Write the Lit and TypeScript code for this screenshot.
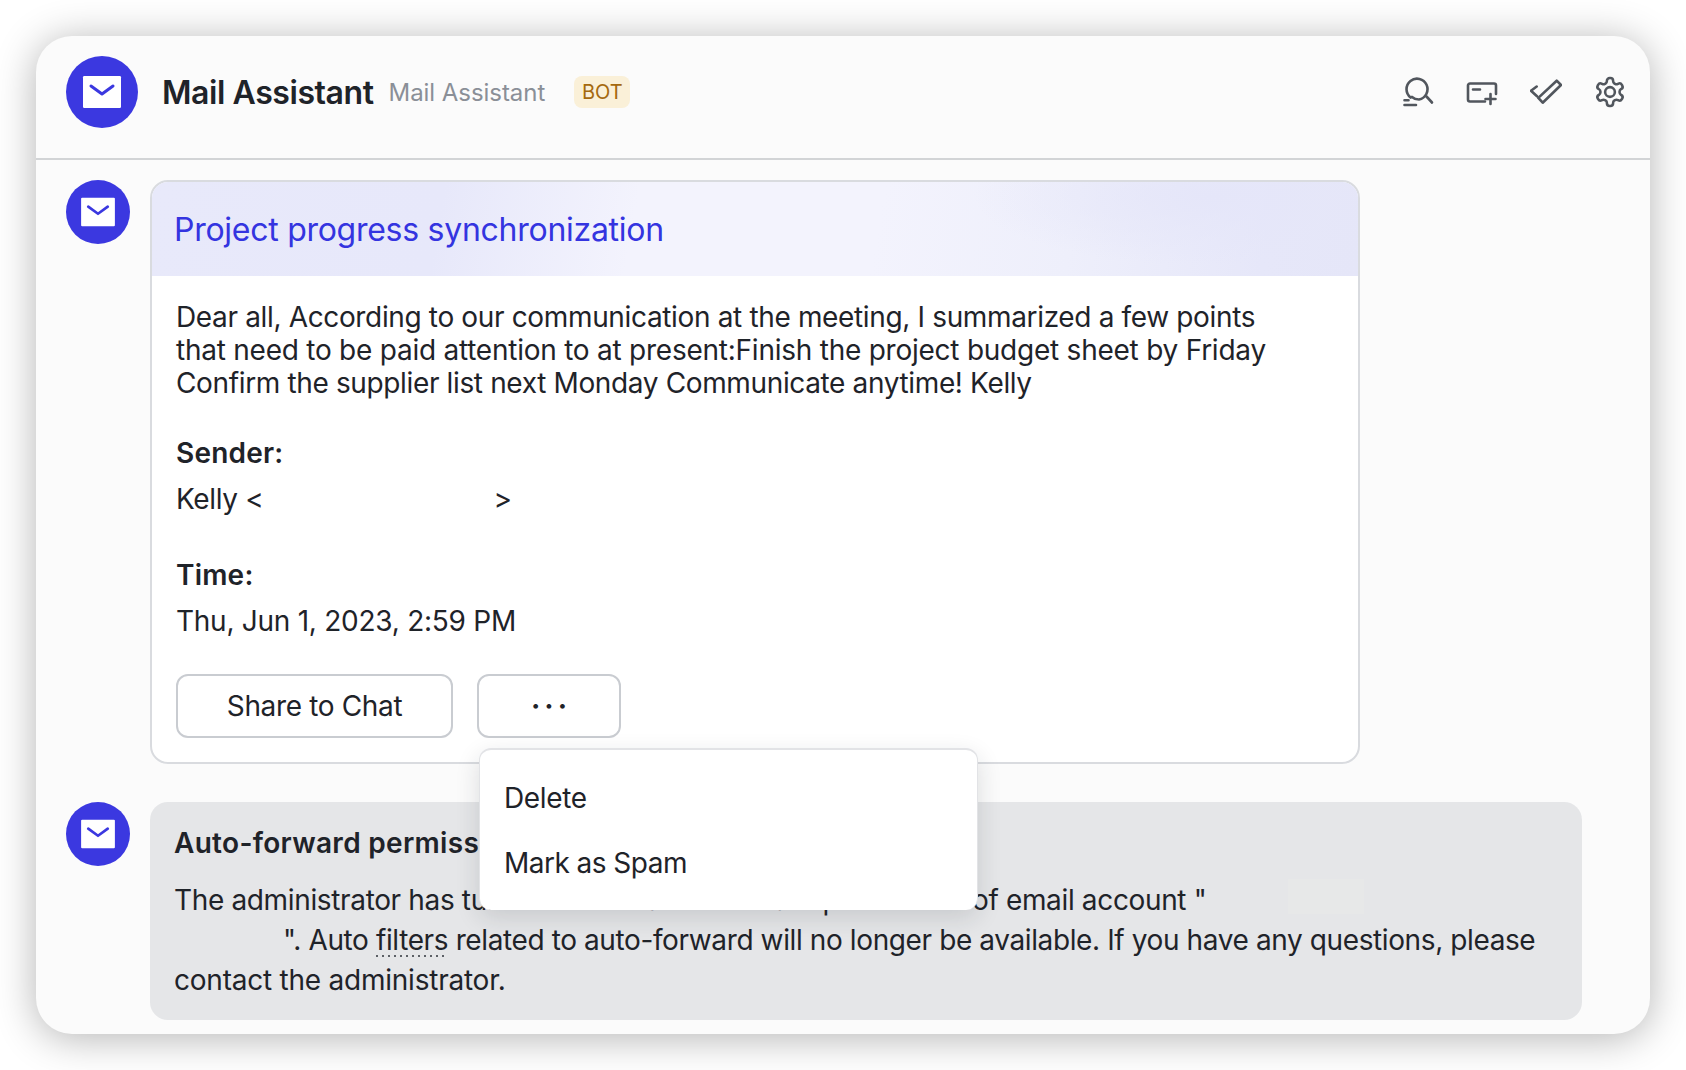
import { LitElement, html, css } from "lit";
import { customElement } from "lit/decorators.js";

const mail = (cls: string) => html`<svg class=${cls} viewBox="0 0 72 72" aria-hidden="true">
  <circle cx="36" cy="36" r="36" fill="#3b38e0"></circle>
  <rect x="17" y="20" width="38" height="32" rx="1.2" fill="#fff"></rect>
  <path d="M25 30l11 8 11-8" fill="none" stroke="#3b38e0" stroke-width="3" stroke-linecap="round" stroke-linejoin="round"></path>
</svg>`;

@customElement("app-root")
export class AppRoot extends LitElement {
  static styles = css`
    :host {
      display: block;
      padding: 36px;
      background: #fff;
      font-family: Inter, "Liberation Sans", sans-serif;
      color: #1f2329;
      font-size: 28px;
      line-height: 40px;
      letter-spacing: -0.35px;
    }
    .window {
      width: 1614px;
      height: 998px;
      box-sizing: border-box;
      background: #fbfbfb;
      border-radius: 36px;
      box-shadow: 0 4px 40px rgba(0, 0, 0, 0.3);
    }
    .header {
      height: 124px;
      box-sizing: border-box;
      border-bottom: 2px solid #d2d4d6;
      padding: 20px 24px 0 30px;
      display: flex;
      align-items: flex-start;
    }
    .avatar-lg { width: 72px; height: 72px; flex: none; display: block; }
    .avatar { width: 64px; height: 64px; flex: none; display: block; }
    .names {
      display: flex;
      align-items: center;
      height: 72px;
      margin-left: 24px;
    }
    .title { font-size: 32px; font-weight: 570; letter-spacing: -0.43px; padding-top: 2px; }
    .sub { font-size: 24px; color: #8a8f97; margin-left: 15px; letter-spacing: -0.05px; padding-top: 1px; }
    .tag {
      margin-left: 29px;
      width: 56px;
      height: 32px;
      border-radius: 8px;
      background: #faf0d8;
      color: #a5690f;
      font-size: 20px;
      line-height: 32px;
      text-align: center;
      letter-spacing: 0;
    }
    .tools {
      margin-left: auto;
      height: 72px;
      display: flex;
      align-items: center;
      gap: 32px;
    }
    .tools svg {
      width: 32px;
      height: 32px;
      display: block;
      fill: none;
      stroke: #51565d;
      stroke-width: 2.6;
      stroke-linecap: round;
      stroke-linejoin: round;
    }
    .tools svg.gear { stroke-width: 1.85; }
    .msgs { padding: 20px 30px 0; }
    .row { display: flex; gap: 20px; align-items: flex-start; }
    .row + .row { margin-top: 38px; }
    .card {
      width: 1210px;
      box-sizing: border-box;
      border: 2px solid #d9dbdf;
      border-radius: 18px;
      background: #fff;
    }
    .card-head {
      height: 94px;
      box-sizing: border-box;
      border-radius: 16px 16px 0 0;
      padding: 2px 0 0 22px;
      display: flex;
      align-items: center;
      font-size: 32px;
      letter-spacing: -0.27px;
      color: #3434e0;
      background:
        radial-gradient(ellipse 240px 70px at 88% 15%, #e5e6f9 0%, rgba(229, 230, 249, 0) 100%),
        linear-gradient(100deg, #e8e9fa 0%, #e7e8fa 24%, #f3f3fd 40%, #f3f3fd 60%, #eeeffb 76%, #e6e7f9 92%, #e5e6f8 100%);
    }
    .card-body { padding: 25px 24px 24px; }
    .desc { line-height: 33px; }
    .tight { letter-spacing: -0.36px; }
    .loose { letter-spacing: -0.24px; }
    .label { font-weight: 600; margin-top: 33px; letter-spacing: 0.2px; }
    .value { margin-top: 6px; }
    .value.loose { letter-spacing: -0.26px; }
    .value + .label { margin-top: 36px; }
    .gap-email { display: inline-block; width: 230px; }
    .actions { display: flex; gap: 24px; margin-top: 33px; }
    .btn {
      height: 64px;
      box-sizing: border-box;
      border: 2px solid #c9ccd1;
      border-radius: 12px;
      background: #fff;
      font: inherit;
      letter-spacing: inherit;
      color: inherit;
      padding: 0;
    }
    .btn-share { width: 277px; }
    .btn-more { width: 144px; font-weight: 700; letter-spacing: 4px; padding-left: 4px; display: block; }
    .more-wrap { position: relative; }
    .menu {
      position: absolute;
      left: 2px;
      top: 74px;
      width: 499px;
      height: 162px;
      box-sizing: border-box;
      background: #fff;
      border: 2px solid #e2e3e6;
      border-width: 2px 1px 0;
      border-radius: 12px;
      padding: 28px 24px 0;
      box-shadow: 0 8px 24px rgba(31, 35, 41, 0.14);
      z-index: 2;
    }
    .menu div + div { margin-top: 25px; letter-spacing: -0.53px; }
    .notice {
      width: 1432px;
      box-sizing: border-box;
      background: #e5e6e8;
      border-radius: 18px;
      padding: 21px 24px 20px;
    }
    .notice-title { font-weight: 600; white-space: nowrap; letter-spacing: 0.3px; }
    .notice-text { margin-top: 16px; white-space: nowrap; }
    .notice-text .l2 { letter-spacing: -0.39px; }
    .notice-text .l3 { letter-spacing: -0.23px; }
    .gap-addr { display: inline-block; width: 109px; }
    .pale {
      display: inline-block;
      width: 76px;
      height: 35px;
      margin-left: 82px;
      vertical-align: -4px;
      background: #e7e8e8;
    }
    .dotted {
      background: linear-gradient(90deg, #5c6066 2px, transparent 2px) 0 100% / 6px 2px repeat-x;
    }
  `;

  render() {
    return html`<div class="window">
      <div class="header">
        ${mail("avatar-lg")}
        <div class="names">
          <span class="title">Mail Assistant</span>
          <span class="sub">Mail Assistant</span>
          <span class="tag">BOT</span>
        </div>
        <div class="tools">
          <svg viewBox="0 0 32 32">
            <path d="M8.6 21.5A10.5 10.5 0 1 1 17 23.5a10.5 10.5 0 0 1-7-2.6"></path>
            <path d="M24.5 20.5L30 26.5M2.5 24.2H6.5M2.5 29H14"></path>
          </svg>
          <svg viewBox="0 0 32 32">
            <path d="M19 25.5H4a2 2 0 0 1-2-2v-14a2 2 0 0 1 2-2h24a2 2 0 0 1 2 2V18"></path>
            <path d="M7 13.5h7M24.5 18v10M19.5 23h10"></path>
          </svg>
          <svg viewBox="0 0 32 32">
            <path d="M6.7 10.5L1 14.7l6 5.6"></path>
            <path d="M26.7 4.7L31 9 12.7 26.7 8.3 21.9z"></path>
          </svg>
          <svg class="gear" viewBox="0.5 0.5 23 23">
            <path d="M12.22 2h-.44a2 2 0 0 0-2 2v.18a2 2 0 0 1-1 1.73l-.43.25a2 2 0 0 1-2 0l-.15-.08a2 2 0 0 0-2.73.73l-.22.38a2 2 0 0 0 .73 2.73l.15.1a2 2 0 0 1 1 1.72v.51a2 2 0 0 1-1 1.74l-.15.09a2 2 0 0 0-.73 2.73l.22.38a2 2 0 0 0 2.73.73l.15-.08a2 2 0 0 1 2 0l.43.25a2 2 0 0 1 1 1.73V20a2 2 0 0 0 2 2h.44a2 2 0 0 0 2-2v-.18a2 2 0 0 1 1-1.73l.43-.25a2 2 0 0 1 2 0l.15.08a2 2 0 0 0 2.73-.73l.22-.39a2 2 0 0 0-.73-2.73l-.15-.08a2 2 0 0 1-1-1.74v-.5a2 2 0 0 1 1-1.74l.15-.09a2 2 0 0 0 .73-2.73l-.22-.38a2 2 0 0 0-2.73-.73l-.15.08a2 2 0 0 1-2 0l-.43-.25a2 2 0 0 1-1-1.73V4a2 2 0 0 0-2-2z"></path>
            <circle cx="12" cy="12" r="3.5"></circle>
          </svg>
        </div>
      </div>
      <div class="msgs">
        <div class="row">
          ${mail("avatar")}
          <div class="card">
            <div class="card-head">Project progress synchronization</div>
            <div class="card-body">
              <div class="desc">Dear all, According to our communication at the meeting, I summarized a few points<br /><span class="loose">that need to be paid attention to at present:Finish the project budget sheet by Friday</span><br /><span class="tight">Confirm the supplier list next Monday Communicate anytime! Kelly</span></div>
              <div class="label">Sender:</div>
              <div class="value">Kelly &lt;<span class="gap-email"></span>&gt;</div>
              <div class="label">Time:</div>
              <div class="value loose">Thu, Jun 1, 2023, 2:59 PM</div>
              <div class="actions">
                <button class="btn btn-share">Share to Chat</button>
                <div class="more-wrap">
                  <button class="btn btn-more">···</button>
                  <div class="menu">
                    <div>Delete</div>
                    <div>Mark as Spam</div>
                  </div>
                </div>
              </div>
            </div>
          </div>
        </div>
        <div class="row">
          ${mail("avatar")}
          <div class="notice">
            <div class="notice-title">Auto-forward permission disabled</div>
            <div class="notice-text">The administrator has turned off the auto-forward permission of email account "<span class="pale"></span><br /><span class="l2"><span class="gap-addr"></span>". Auto <span class="dotted">filters</span> related to auto-forward will no longer be available. If you have any questions, please</span><br /><span class="l3">contact the administrator.</span></div>
          </div>
        </div>
      </div>
    </div>`;
  }
}
